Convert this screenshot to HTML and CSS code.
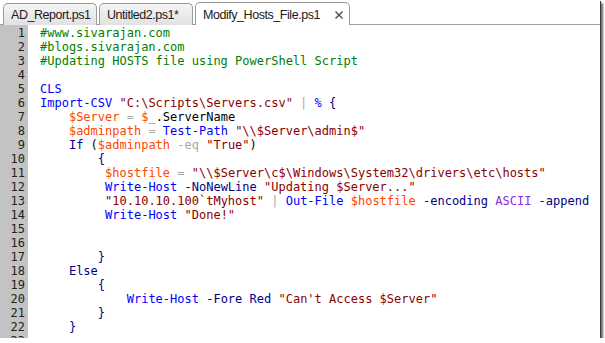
FILE: index.html
```html
<!DOCTYPE html>
<html>
<head>
<meta charset="utf-8">
<link rel="stylesheet" href="styles.css">
</head>
<body>
<div class="window">
  <div class="tabbar">
    <div class="tab w1">AD_Report.ps1</div>
    <div class="tab w1">Untitled2.ps1*</div>
    <div class="tab active">Modify_Hosts_File.ps1
      <svg class="close" width="10" height="10" viewBox="0 0 10 10"><path d="M1.5 1.5 L8.5 8.5 M8.5 1.5 L1.5 8.5" stroke="#555" stroke-width="1.5"/></svg>
    </div>
  </div>
  <div class="editor">
    <div class="gutter">
      <div>1</div><div>2</div><div>3</div><div>4</div><div>5</div><div>6</div><div>7</div><div>8</div><div>9</div><div>10</div><div>11</div><div>12</div><div>13</div><div>14</div><div>15</div><div>16</div><div>17</div><div>18</div><div>19</div><div>20</div><div>21</div><div>22</div><div>23</div>
    </div>
<pre class="code"><span class="c">#www.sivarajan.com</span>
<span class="c">#blogs.sivarajan.com</span>
<span class="c">#Updating HOSTS file using PowerShell Script</span>

<span class="k">CLS</span>
<span class="k">Import-CSV</span> <span class="s">"C:\Scripts\Servers.csv"</span> <span class="o">|</span> <span class="k">%</span> <span class="b">{</span>
    <span class="v">$Server</span> <span class="o">=</span> <span class="v">$_</span>.ServerName
    <span class="v">$adminpath</span> <span class="o">=</span> <span class="k">Test-Path</span> <span class="s">"\\$Server\admin$"</span>
    <span class="b">If</span> (<span class="v">$adminpath</span> <span class="o">-eq</span> <span class="s">"True"</span>)
        <span class="b">{</span>
         <span class="v">$hostfile</span> <span class="o">=</span> <span class="s">"\\$Server\c$\Windows\System32\drivers\etc\hosts"</span>
         <span class="k">Write-Host</span> <span class="p">-NoNewLine</span> <span class="s">"Updating $Server..."</span>
         <span class="s">"10.10.10.100`tMyhost"</span> <span class="o">|</span> <span class="k">Out-File</span> <span class="v">$hostfile</span> <span class="p">-encoding</span> <span class="t">ASCII</span> <span class="p">-append</span>
         <span class="k">Write-Host</span> <span class="s">"Done!"</span>


        <span class="b">}</span>
    <span class="b">Else</span>
        <span class="b">{</span>
            <span class="k">Write-Host</span> <span class="p">-Fore</span> <span class="d">Red</span> <span class="s">"Can't Access $Server"</span>
        <span class="b">}</span>
    <span class="b">}</span>
</pre>
  </div>
</div>
</body>
</html>
```

FILE: styles.css
```css
html, body {
  margin: 0;
  padding: 0;
  background: #ffffff;
}
.window {
  width: 600px;
  height: 338px;
  background: #ffffff;
  overflow: hidden;
  box-shadow: 1px 1px 0 #3a3a3a, 3px 3px 2px rgba(0,0,0,0.6);
  display: flex;
  flex-direction: column;
}
.tabbar {
  height: 25px;
  flex: none;
  border-bottom: 1px solid #a0a0a0;
  background: #ffffff;
  display: flex;
  align-items: flex-end;
  padding-left: 3px;
  gap: 2px;
  box-sizing: border-box;
}
.tab {
  box-sizing: border-box;
  border: 1px solid #9a9a9a;
  border-bottom: none;
  border-radius: 5px 5px 0 0;
  background: linear-gradient(#f4f4f4, #e2e2e2);
  font-family: "Liberation Sans", Arial, sans-serif;
  font-size: 12.5px;
  letter-spacing: -0.45px;
  color: #1a1a1a;
  padding: 1px 0 0 7px;
  display: flex;
  align-items: center;
  margin-bottom: -1px;
  height: 22px;
  white-space: nowrap;
}
.w1 {
  width: 94px;
}
.tab.active {
  background: #ffffff;
  height: 23px;
  width: 155px;
  gap: 14px;
}
.close {
  display: block;
}
.editor {
  flex: 1;
  display: flex;
  overflow: hidden;
}
.gutter {
  width: 28px;
  flex: none;
  background: #c3c3c3;
  font-family: "DejaVu Sans Mono", monospace;
  font-size: 12px;
  line-height: 14px;
  color: #222222;
  text-align: right;
  padding-right: 3px;
  padding-top: 1px;
  box-sizing: border-box;
}
.code {
  margin: 0;
  padding: 1px 0 0 12px;
  font-family: "DejaVu Sans Mono", monospace;
  font-size: 12px;
  line-height: 14px;
  color: #000000;
  white-space: pre;
}
.c { color: #008000; }
.k { color: #0000ff; }
.s { color: #8b0000; }
.v { color: #ff4500; }
.o { color: #a9a9a9; }
.b { color: #00008b; }
.p { color: #000080; }
.t { color: #8a2be2; }
.d { color: #00008b; }
```
